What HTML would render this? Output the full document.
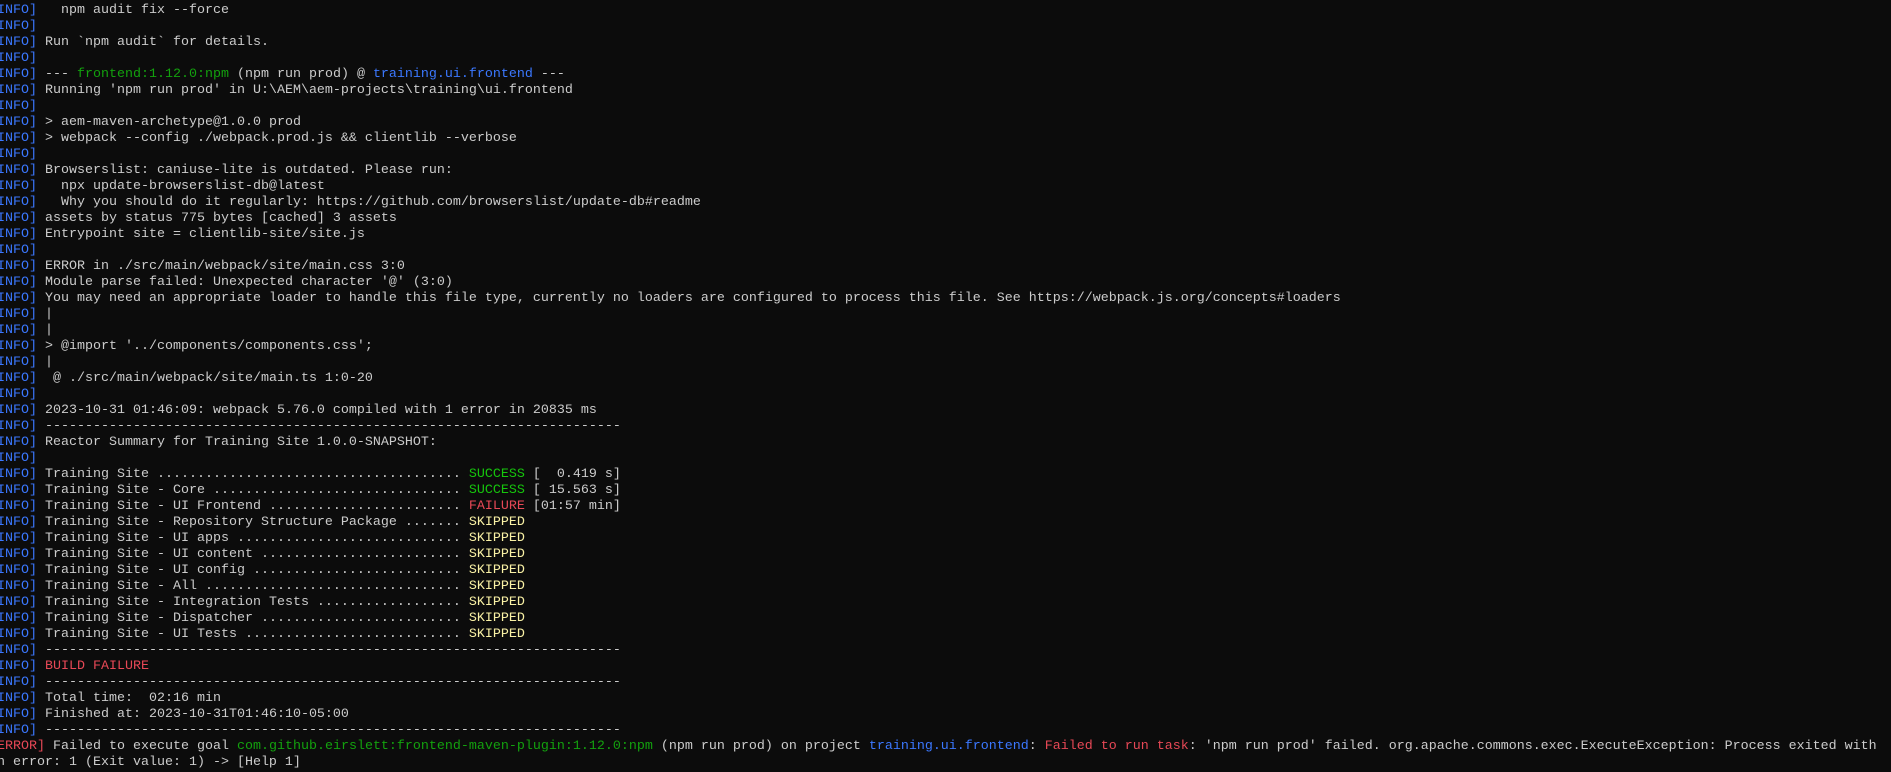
<!DOCTYPE html>
<html><head><meta charset="utf-8"><style>
html,body{margin:0;padding:0;background:#0c0c0c;width:1891px;height:772px;overflow:hidden}
pre{position:absolute;left:-11px;top:-13px;margin:0;font-family:"Liberation Mono",monospace;font-size:13.33px;line-height:16px;color:#cccccc;white-space:pre}
.b{color:#3b78ff}.g{color:#16c60c}.r{color:#e74856}.y{color:#f9f1a5}.dg{color:#13a10e}
</style></head><body><pre>
<span class="b">[INFO]</span> To address all issues (including breaking changes), run:
<span class="b">[INFO]</span>   npm audit fix --force
<span class="b">[INFO]</span>
<span class="b">[INFO]</span> Run `npm audit` for details.
<span class="b">[INFO]</span>
<span class="b">[INFO]</span> --- <span class="dg">frontend:1.12.0:npm</span> (npm run prod) @ <span class="b">training.ui.frontend</span> ---
<span class="b">[INFO]</span> Running 'npm run prod' in U:\AEM\aem-projects\training\ui.frontend
<span class="b">[INFO]</span>
<span class="b">[INFO]</span> &gt; aem-maven-archetype@1.0.0 prod
<span class="b">[INFO]</span> &gt; webpack --config ./webpack.prod.js &amp;&amp; clientlib --verbose
<span class="b">[INFO]</span>
<span class="b">[INFO]</span> Browserslist: caniuse-lite is outdated. Please run:
<span class="b">[INFO]</span>   npx update-browserslist-db@latest
<span class="b">[INFO]</span>   Why you should do it regularly: https://github.com/browserslist/update-db#readme
<span class="b">[INFO]</span> assets by status 775 bytes [cached] 3 assets
<span class="b">[INFO]</span> Entrypoint site = clientlib-site/site.js
<span class="b">[INFO]</span>
<span class="b">[INFO]</span> ERROR in ./src/main/webpack/site/main.css 3:0
<span class="b">[INFO]</span> Module parse failed: Unexpected character '@' (3:0)
<span class="b">[INFO]</span> You may need an appropriate loader to handle this file type, currently no loaders are configured to process this file. See https://webpack.js.org/concepts#loaders
<span class="b">[INFO]</span> |
<span class="b">[INFO]</span> |
<span class="b">[INFO]</span> &gt; @import '../components/components.css';
<span class="b">[INFO]</span> |
<span class="b">[INFO]</span>  @ ./src/main/webpack/site/main.ts 1:0-20
<span class="b">[INFO]</span>
<span class="b">[INFO]</span> 2023-10-31 01:46:09: webpack 5.76.0 compiled with 1 error in 20835 ms
<span class="b">[INFO]</span> ------------------------------------------------------------------------
<span class="b">[INFO]</span> Reactor Summary for Training Site 1.0.0-SNAPSHOT:
<span class="b">[INFO]</span>
<span class="b">[INFO]</span> Training Site ...................................... <span class="g">SUCCESS</span> [  0.419 s]
<span class="b">[INFO]</span> Training Site - Core ............................... <span class="g">SUCCESS</span> [ 15.563 s]
<span class="b">[INFO]</span> Training Site - UI Frontend ........................ <span class="r">FAILURE</span> [01:57 min]
<span class="b">[INFO]</span> Training Site - Repository Structure Package ....... <span class="y">SKIPPED</span>
<span class="b">[INFO]</span> Training Site - UI apps ............................ <span class="y">SKIPPED</span>
<span class="b">[INFO]</span> Training Site - UI content ......................... <span class="y">SKIPPED</span>
<span class="b">[INFO]</span> Training Site - UI config .......................... <span class="y">SKIPPED</span>
<span class="b">[INFO]</span> Training Site - All ................................ <span class="y">SKIPPED</span>
<span class="b">[INFO]</span> Training Site - Integration Tests .................. <span class="y">SKIPPED</span>
<span class="b">[INFO]</span> Training Site - Dispatcher ......................... <span class="y">SKIPPED</span>
<span class="b">[INFO]</span> Training Site - UI Tests ........................... <span class="y">SKIPPED</span>
<span class="b">[INFO]</span> ------------------------------------------------------------------------
<span class="b">[INFO]</span> <span class="r">BUILD FAILURE</span>
<span class="b">[INFO]</span> ------------------------------------------------------------------------
<span class="b">[INFO]</span> Total time:  02:16 min
<span class="b">[INFO]</span> Finished at: 2023-10-31T01:46:10-05:00
<span class="b">[INFO]</span> ------------------------------------------------------------------------
<span class="r">[ERROR]</span> Failed to execute goal <span class="dg">com.github.eirslett:frontend-maven-plugin:1.12.0:npm</span> (npm run prod) on project <span class="b">training.ui.frontend</span>: <span class="r">Failed to run task</span>: 'npm run prod' failed. org.apache.commons.exec.ExecuteException: Process exited with
an error: 1 (Exit value: 1) -&gt; [Help 1]
</pre></body></html>
